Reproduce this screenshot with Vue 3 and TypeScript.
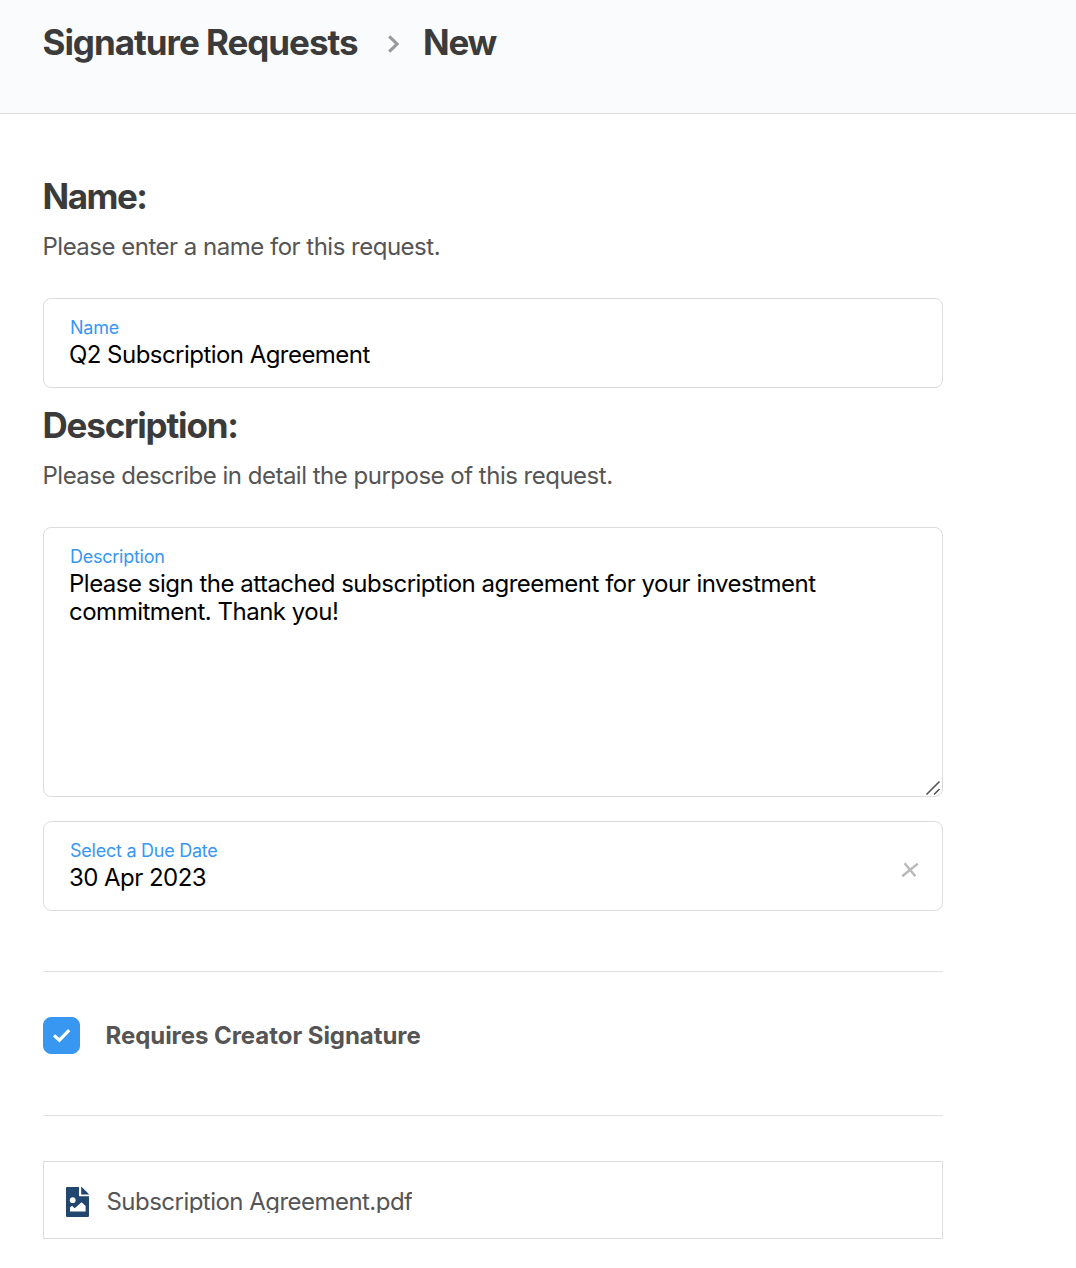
<script setup lang="ts">
import { ref } from 'vue'

const name = ref('Q2 Subscription Agreement')
const description = ref('Please sign the attached subscription agreement for your investment commitment. Thank you!')
const dueDate = ref('30 Apr 2023')
const requiresSignature = ref(true)
const fileName = 'Subscription Agreement.pdf'
</script>

<template>
  <div class="page">
    <header class="header">
      <span class="crumb crumb-root">Signature Requests</span>
      <svg class="chevron" width="12" height="20" viewBox="0 0 12 20">
        <path d="M2.2 2.4 10 10 2.2 17.6" fill="none" stroke="#999" stroke-width="3" />
      </svg>
      <span class="crumb crumb-new">New</span>
    </header>

    <main class="form">
      <section class="intro">
        <h2 class="title title-name">Name:</h2>
        <p class="hint">Please enter a name for this request.</p>
      </section>
      <label class="field">
        <span class="label">Name</span>
        <input v-model="name" class="control" type="text" />
      </label>

      <section class="intro intro-desc">
        <h2 class="title">Description:</h2>
        <p class="hint">Please describe in detail the purpose of this request.</p>
      </section>
      <label class="field field-area">
        <span class="label">Description</span>
        <textarea v-model="description" class="control area"></textarea>
        <svg class="grip" width="16" height="16" viewBox="0 0 16 16">
          <path d="M1.5 14.5 14.5 1.5M9 14.5 14.5 9" fill="none" stroke="#555" stroke-width="1.6" />
        </svg>
      </label>

      <label class="field field-date">
        <span class="label">Select a Due Date</span>
        <input v-model="dueDate" class="control" type="text" />
        <svg class="clear" width="18" height="16" viewBox="0 0 18 16" @click="dueDate = ''">
          <path d="M3.6 1.2 14.4 14.2M16.8 1.6 1.2 14.2" fill="none" stroke="#b9b9b9" stroke-width="2.5" />
        </svg>
      </label>

      <div class="signature" @click="requiresSignature = !requiresSignature">
        <span class="box" :class="{ checked: requiresSignature }">
          <svg v-if="requiresSignature" width="19" height="15" viewBox="0 0 19 15">
            <path d="M2 7.4 7.4 12.2 17.2 2.2" fill="none" stroke="#fff" stroke-width="3.2" />
          </svg>
        </span>
        <span class="signature-text">Requires Creator Signature</span>
      </div>

      <div class="file">
        <svg class="file-icon" width="23" height="30" viewBox="0 0 23 30">
          <path d="M1 0H13V9.2H23V29A1 1 0 0 1 22 30H1A1 1 0 0 1 0 29V1A1 1 0 0 1 1 0Z" fill="#23466f" />
          <path d="M15.2 0H15.8L23 7.2V7.6H15.2Z" fill="#23466f" />
          <circle cx="6.7" cy="13.2" r="2.9" fill="#fff" />
          <path d="M4 24.6V20.6L6 18.8 8.6 21.2 15.6 15.2 19.6 19V24.6Z" fill="#fff" />
        </svg>
        <span class="file-name">{{ fileName }}</span>
      </div>
    </main>
  </div>
</template>

<style>
body {
  margin: 0;
  background: #fff;
}
</style>

<style scoped>
.page {
  min-height: 1268px;
  font-family: Inter, "Liberation Sans", sans-serif;
  color: #555;
  background: #fff;
}
.page * {
  box-sizing: border-box;
}
.header {
  display: flex;
  height: 114px;
  padding: 21px 42px 0;
  background: #fafbfd;
  border-bottom: 1px solid #dcdcdc;
}
.crumb,
.title {
  font-size: 35px;
  line-height: 42px;
  font-weight: 700;
  letter-spacing: -1.2px;
  color: #3b3b3b;
  white-space: nowrap;
}
.crumb-root {
  width: 344.5px;
  margin-left: 0.5px;
  letter-spacing: -1.03px;
}
.crumb-new {
  margin-left: 24px;
  letter-spacing: -1.3px;
}
.chevron {
  margin-top: 13px;
}
.form {
  width: 900px;
  margin-left: 43px;
  padding-top: 61px;
}
.title {
  margin: 0 0 0 -0.5px;
}
.title-name {
  letter-spacing: -1.5px;
}
.hint {
  margin: 15px 0 0 -0.5px;
  font-size: 24px;
  line-height: 30px;
  letter-spacing: -0.5px;
  white-space: nowrap;
}
.intro {
  height: 123px;
}
.intro-desc {
  margin-top: 16px;
}
.field {
  position: relative;
  display: flex;
  flex-direction: column;
  height: 90px;
  padding: 18px 25px 0;
  border: 1px solid #dcdcdc;
  border-radius: 8px;
}
.label {
  padding-left: 1px;
  font-size: 18px;
  line-height: 22px;
  letter-spacing: -0.25px;
  color: #3897f0;
}
.control {
  display: block;
  width: 100%;
  height: 30px;
  margin: 0;
  padding: 0;
  border: 0;
  outline: 0;
  resize: none;
  overflow: hidden;
  background: transparent;
  color: #000;
  font-family: inherit;
  font-size: 24px;
  line-height: 28px;
  letter-spacing: -0.54px;
}
.field-area {
  height: 270px;
}
.area {
  height: 200px;
  margin-top: 2px;
  letter-spacing: -0.5px;
}
.grip {
  position: absolute;
  right: 1px;
  bottom: 0;
}
.field-date {
  margin-top: 24px;
}
.clear {
  position: absolute;
  right: 23px;
  top: 40px;
}
.signature {
  display: flex;
  align-items: center;
  height: 145px;
  margin-top: 60px;
  padding-bottom: 16px;
  border-top: 1px solid #e2e2e2;
  border-bottom: 1px solid #e2e2e2;
}
.box {
  display: flex;
  align-items: center;
  justify-content: center;
  width: 37px;
  height: 37px;
  border: 1px solid #dcdcdc;
  border-radius: 8px;
}
.box.checked {
  border-color: #3897f0;
  background: #3897f0;
}
.signature-text {
  margin-left: 25.5px;
  font-size: 24px;
  font-weight: 700;
  line-height: 30px;
  letter-spacing: -0.05px;
}
.file {
  display: flex;
  align-items: center;
  height: 78px;
  margin-top: 45px;
  padding-left: 22px;
  border: 1px solid #dcdcdc;
}
.file-icon {
  margin-top: 4px;
}
.file-name {
  height: 24px;
  margin: 2px 0 0 17.5px;
  overflow: hidden;
  font-size: 24px;
  line-height: 26px;
  letter-spacing: -0.53px;
  white-space: nowrap;
}
</style>
